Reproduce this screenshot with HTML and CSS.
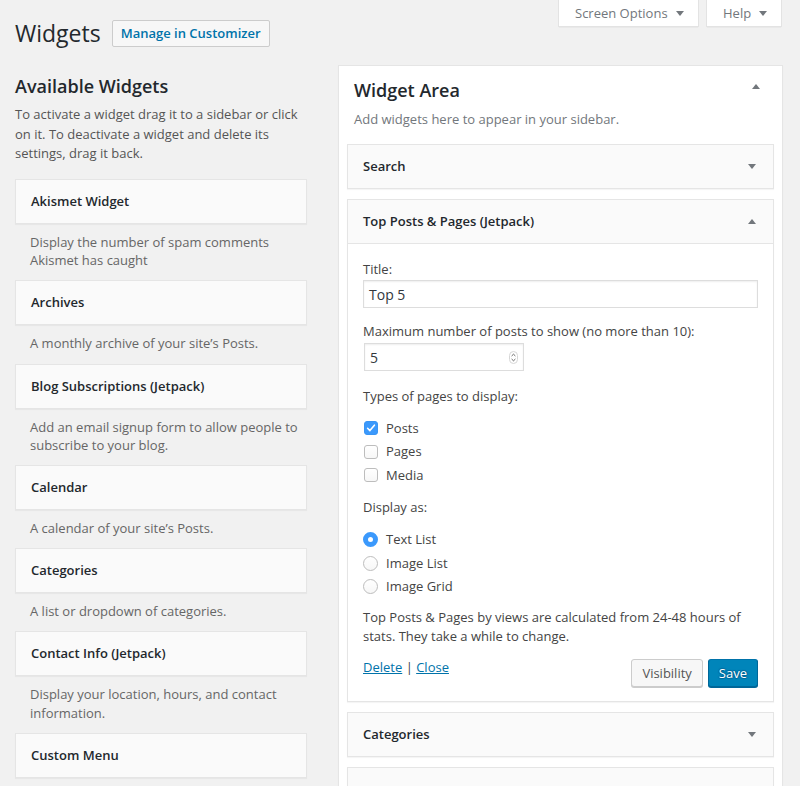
FILE: index.html
```html
<!DOCTYPE html>
<html lang="en">
<head>
<meta charset="utf-8">
<title>Widgets</title>
<link rel="stylesheet" href="styles.css">
</head>
<body>
<div class="topbar">
  <div class="title-row">
    <h1 class="page-title">Widgets</h1>
    <a class="title-action" href="#">Manage in Customizer</a>
  </div>
  <div class="meta-links">
    <button class="meta-tab meta-tab-screen" type="button">Screen Options
      <svg class="tri" width="8" height="5" viewBox="0 0 8 5"><polygon points="0,0 8,0 4,5"/></svg></button>
    <button class="meta-tab meta-tab-help" type="button">Help
      <svg class="tri" width="8" height="5" viewBox="0 0 8 5"><polygon points="0,0 8,0 4,5"/></svg></button>
  </div>
</div>

<div class="columns">
  <div class="available">
    <h2 class="col-title">Available Widgets</h2>
    <p class="intro">To activate a widget drag it to a sidebar or click on it. To deactivate a widget and delete its settings, drag it back.</p>
    <div class="widget-list">
      <div class="widget-item">
        <div class="widget-top"><h3 class="widget-title">Akismet Widget</h3></div>
        <div class="widget-desc">Display the number of spam comments Akismet has caught</div>
      </div>
      <div class="widget-item">
        <div class="widget-top"><h3 class="widget-title">Archives</h3></div>
        <div class="widget-desc">A monthly archive of your site’s Posts.</div>
      </div>
      <div class="widget-item">
        <div class="widget-top"><h3 class="widget-title">Blog Subscriptions (Jetpack)</h3></div>
        <div class="widget-desc">Add an email signup form to allow people to subscribe to your blog.</div>
      </div>
      <div class="widget-item">
        <div class="widget-top"><h3 class="widget-title">Calendar</h3></div>
        <div class="widget-desc">A calendar of your site’s Posts.</div>
      </div>
      <div class="widget-item">
        <div class="widget-top"><h3 class="widget-title">Categories</h3></div>
        <div class="widget-desc">A list or dropdown of categories.</div>
      </div>
      <div class="widget-item">
        <div class="widget-top"><h3 class="widget-title">Contact Info (Jetpack)</h3></div>
        <div class="widget-desc">Display your location, hours, and contact information.</div>
      </div>
      <div class="widget-item">
        <div class="widget-top"><h3 class="widget-title">Custom Menu</h3></div>
      </div>
    </div>
  </div>

  <div class="sidebar-panel">
    <div class="panel-head">
      <h2 class="col-title">Widget Area</h2>
      <svg class="tri panel-tri" width="8" height="5" viewBox="0 0 8 5"><polygon points="0,5 8,5 4,0"/></svg>
    </div>
    <p class="panel-desc">Add widgets here to appear in your sidebar.</p>

    <div class="sidebar-widgets">
      <div class="sw">
        <div class="sw-top">
          <h3 class="widget-title">Search</h3>
          <svg class="tri" width="8" height="5" viewBox="0 0 8 5"><polygon points="0,0 8,0 4,5"/></svg>
        </div>
      </div>

      <div class="sw sw-open">
        <div class="sw-top">
          <h3 class="widget-title">Top Posts &amp; Pages (Jetpack)</h3>
          <svg class="tri" width="8" height="5" viewBox="0 0 8 5"><polygon points="0,5 8,5 4,0"/></svg>
        </div>
        <div class="sw-inside">
          <div class="field-label">Title:</div>
          <div class="text-field">Top 5</div>

          <div class="field-label gap-a">Maximum number of posts to show (no more than 10):</div>
          <div class="text-field number-field">
            <span>5</span>
            <svg class="spinner" width="9" height="13" viewBox="0 0 9 13">
              <rect x="0.5" y="0.5" width="8" height="12" rx="4" fill="#fff" stroke="#d6d6d6"/>
              <polyline points="2.6,5 4.5,3.2 6.4,5" fill="none" stroke="#555" stroke-width="0.9"/>
              <polyline points="2.6,8 4.5,9.8 6.4,8" fill="none" stroke="#555" stroke-width="0.9"/>
            </svg>
          </div>

          <div class="field-label gap-b">Types of pages to display:</div>
          <div class="choice-list">
            <div class="choice">
              <span class="box box-checked">
                <svg width="14" height="14" viewBox="0 0 14 14"><polyline points="3.6,7.3 5.9,9.6 10.4,4.2" fill="none" stroke="#fff" stroke-width="1.6" stroke-linecap="round" stroke-linejoin="round"/></svg>
              </span>
              <span>Posts</span>
            </div>
            <div class="choice"><span class="box"></span><span>Pages</span></div>
            <div class="choice"><span class="box"></span><span>Media</span></div>
          </div>

          <div class="field-label gap-c">Display as:</div>
          <div class="choice-list">
            <div class="choice"><span class="radio radio-checked"></span><span>Text List</span></div>
            <div class="choice"><span class="radio"></span><span>Image List</span></div>
            <div class="choice"><span class="radio"></span><span>Image Grid</span></div>
          </div>

          <p class="note">Top Posts &amp; Pages by views are calculated from 24-48 hours of stats. They take a while to change.</p>

          <div class="actions">
            <div class="links"><a href="#">Delete</a> | <a href="#">Close</a></div>
            <div class="buttons">
              <button class="btn" type="button">Visibility</button>
              <button class="btn btn-primary" type="button">Save</button>
            </div>
          </div>
        </div>
      </div>

      <div class="sw">
        <div class="sw-top">
          <h3 class="widget-title">Categories</h3>
          <svg class="tri" width="8" height="5" viewBox="0 0 8 5"><polygon points="0,0 8,0 4,5"/></svg>
        </div>
      </div>

      <div class="sw">
        <div class="sw-top">
          <h3 class="widget-title">&nbsp;</h3>
        </div>
      </div>
    </div>
  </div>
</div>
</body>
</html>
```

FILE: styles.css
```css
html {
  overflow: hidden;
}

body {
  margin: 0;
  background: #f1f1f1;
  font-family: "Open Sans", "Noto Sans", "Liberation Sans", sans-serif;
  font-size: 13px;
  color: #444;
}

h1, h2, h3, p {
  margin: 0;
}

/* ---------- top bar ---------- */
.topbar {
  display: flex;
  justify-content: space-between;
  align-items: flex-start;
  padding: 0 18px 0 15px;
}

.title-row {
  display: flex;
  align-items: center;
  gap: 11px;
  margin-top: 19px;
  height: 29px;
}

.page-title {
  font-size: 23px;
  line-height: 29px;
  font-weight: 400;
  color: #23282d;
}

.title-action {
  display: block;
  box-sizing: border-box;
  height: 27px;
  line-height: 25px;
  padding: 0 8px;
  border: 1px solid #ccc;
  border-radius: 2px;
  background: #f7f7f7;
  color: #0073aa;
  font-weight: 600;
  font-size: 13px;
  text-decoration: none;
}

.meta-links {
  display: flex;
  gap: 7px;
}

.meta-tab {
  display: flex;
  align-items: center;
  gap: 8px;
  box-sizing: border-box;
  height: 27px;
  padding: 0 0 0 16px;
  background: #fff;
  border: 1px solid #e3e3e3;
  border-top: none;
  box-shadow: 0 1px 1px -1px rgba(0, 0, 0, 0.2);
  font-family: inherit;
  font-size: 13px;
  line-height: 19px;
  color: #72777c;
}

.meta-tab-screen {
  width: 141px;
}

.meta-tab-help {
  width: 76px;
}

.tri {
  fill: #72777c;
  flex: none;
}

/* ---------- columns ---------- */
.columns {
  display: flex;
  align-items: flex-start;
  gap: 31px;
  padding: 17px 0 0 15px;
}

.available {
  width: 292px;
  padding-top: 9px;
}

.col-title {
  font-size: 18px;
  line-height: 24px;
  font-weight: 600;
  color: #23282d;
}

.intro {
  margin-top: 7px;
  line-height: 19.5px;
  color: #555;
}

.widget-list {
  margin-top: 15.5px;
}

.widget-top {
  background: #fafafa;
  border: 1px solid #e5e5e5;
  box-shadow: 0 1px 1px rgba(0, 0, 0, 0.04);
}

.widget-title {
  padding: 15px;
  font-size: 13px;
  line-height: 13px;
  font-weight: 600;
  color: #23282d;
}

.widget-desc {
  padding: 9px 5px 11px 15px;
  line-height: 1.4;
  color: #666;
}

/* ---------- sidebar panel ---------- */
.sidebar-panel {
  box-sizing: border-box;
  width: 445px;
  background: #fff;
  border: 1px solid #e5e5e5;
  box-shadow: 0 1px 1px rgba(0, 0, 0, 0.04);
  padding: 0 8px 10px;
}

.panel-head {
  display: flex;
  justify-content: space-between;
  align-items: flex-start;
  padding: 12px 14px 0 7px;
}

.panel-tri {
  margin-top: 6px;
}

.panel-desc {
  margin: 8px 0 0 7px;
  line-height: 19px;
  color: #72777c;
}

.sidebar-widgets {
  display: flex;
  flex-direction: column;
  gap: 10px;
  margin-top: 15px;
}

.sw {
  background: #fafafa;
  border: 1px solid #e5e5e5;
  box-shadow: 0 1px 1px rgba(0, 0, 0, 0.04);
}

.sw-top {
  display: flex;
  justify-content: space-between;
  align-items: center;
  padding-right: 17px;
}

.sw-open .sw-top {
  border-bottom: 1px solid #e5e5e5;
}

.sw-inside {
  background: #fff;
  padding: 16px 15px 14px;
}

.field-label {
  line-height: 19px;
  color: #444;
}

.gap-a {
  margin-top: 13.5px;
}

.gap-b {
  margin-top: 15.5px;
}

.gap-c {
  margin-top: 13.5px;
}

.text-field {
  box-sizing: border-box;
  height: 28px;
  margin-top: 1px;
  padding: 0 5px;
  display: flex;
  align-items: center;
  background: #fff;
  border: 1px solid #ddd;
  box-shadow: inset 0 1px 2px rgba(0, 0, 0, 0.07);
  font-size: 14px;
  color: #32373c;
}

.number-field {
  width: 160px;
  margin-top: 2.5px;
  margin-left: 1px;
  justify-content: space-between;
  padding-right: 5px;
}

.spinner {
  flex: none;
}

.choice-list {
  margin-top: 13px;
  display: flex;
  flex-direction: column;
  gap: 4.5px;
}

.choice {
  display: flex;
  align-items: center;
  gap: 8px;
  height: 19px;
  line-height: 19px;
  color: #444;
}

.box {
  box-sizing: border-box;
  width: 14px;
  height: 14px;
  margin-left: 1px;
  border: 1px solid #bdbdbd;
  border-radius: 3px;
  background: linear-gradient(#fff, #f7f7f7);
  display: flex;
}

.box-checked {
  border-color: #3a95f4;
  background: #3b99fc;
}

.box-checked svg {
  margin: -1px;
}

.radio {
  box-sizing: border-box;
  width: 15px;
  height: 15px;
  border: 1px solid #bdbdbd;
  border-radius: 50%;
  background: linear-gradient(#fff, #f7f7f7);
}

.radio-checked {
  border: 5px solid #3b99fc;
  background: #fff;
}

.note {
  margin-top: 11.5px;
  line-height: 19px;
  color: #444;
}

.actions {
  display: flex;
  justify-content: space-between;
  align-items: flex-start;
  margin-top: 12px;
}

.links {
  line-height: 19px;
  color: #444;
}

.links a {
  color: #0073aa;
}

.buttons {
  display: flex;
  gap: 5px;
  margin-top: 1px;
}

.btn {
  box-sizing: border-box;
  height: 28px;
  padding: 0 10px 1px;
  border: 1px solid #ccc;
  border-radius: 3px;
  background: #f7f7f7;
  box-shadow: 0 1px 0 #ccc;
  font-family: inherit;
  font-size: 13px;
  line-height: 26px;
  color: #555;
}

.btn-primary {
  background: #0085ba;
  border-color: #0073aa #006799 #006799;
  box-shadow: 0 1px 0 #006799;
  color: #fff;
  text-shadow: 0 -1px 1px #006799, 1px 0 1px #006799, 0 1px 1px #006799, -1px 0 1px #006799;
}
```
